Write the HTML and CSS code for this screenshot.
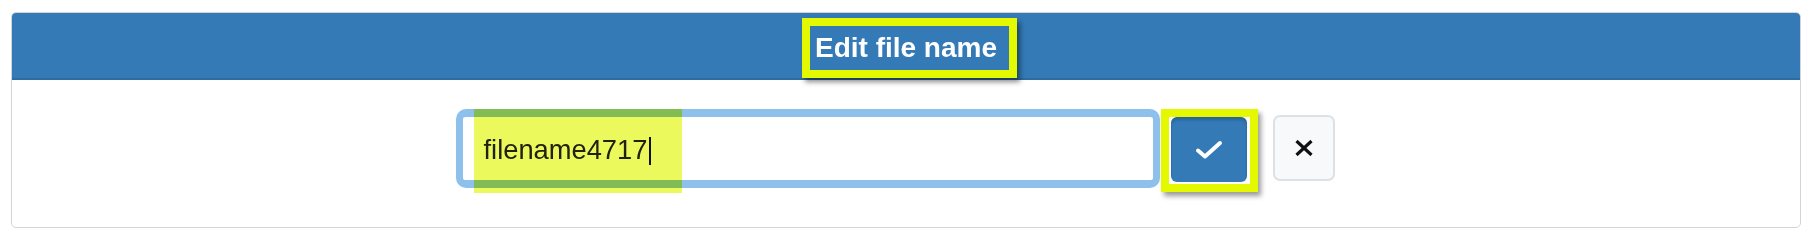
FILE: index.html
```html
<!DOCTYPE html>
<html lang="en">
<head>
<meta charset="utf-8">
<title>Edit file name</title>
<link rel="stylesheet" href="styles.css">
</head>
<body>
<div class="card">
  <div class="card-header">
    <h2 class="title">Edit file name</h2>
  </div>
  <div class="card-body">
    <div class="edit-row">
      <div class="name-input">
        <span class="name-text">filename4717</span><span class="caret"></span>
        <span class="text-hl"></span>
      </div>
      <span class="hl-box">
        <button class="btn-ok" type="button" aria-label="Save">
          <svg width="28" height="20" viewBox="0 0 28 20"><path d="M3 10.5 L10 16.5 L25 3" fill="none" stroke="#fff" stroke-width="4" stroke-linecap="round" stroke-linejoin="round"/></svg>
        </button>
      </span>
      <button class="btn-cancel" type="button" aria-label="Cancel">
        <svg width="18" height="16" viewBox="0 0 18 16"><path d="M1.5 1 L16.5 15 M16.5 1 L1.5 15" fill="none" stroke="#111" stroke-width="3.2" stroke-linecap="butt"/></svg>
      </button>
    </div>
  </div>
</div>
</body>
</html>
```

FILE: styles.css
```css
html, body {
  background: #ffffff;
}
body {
  margin: 12px 16px 0 11px;
  font-family: "Liberation Sans", Arial, sans-serif;
}
.card {
  border: 1px solid #d4d4d4;
  border-radius: 5px;
  overflow: hidden;
  background: #fff;
}
.card-header {
  background: #337ab7;
  border-bottom: 2px solid #2e6b9f;
  display: flex;
  justify-content: center;
  padding: 5px 0 0 7px;
  height: 60px;
}
.title {
  margin: 0;
  height: 44px;
  line-height: 44px;
  padding: 0 12px 0 5px;
  font-size: 28px;
  font-weight: bold;
  color: #ffffff;
  background: #337ab7;
  border: 8px solid #e4f800;
  box-shadow: 3px 4px 5px rgba(0, 0, 0, 0.45);
  position: relative;
  z-index: 1;
}
.card-body {
  height: 147px;
  box-sizing: border-box;
  padding-top: 29px;
}
.edit-row {
  display: flex;
  align-items: flex-start;
  justify-content: center;
  padding-right: 22px;
}
.name-input {
  position: relative;
  box-sizing: border-box;
  width: 704px;
  height: 79px;
  border: 8px solid #8dc1ec;
  border-left-width: 7px;
  border-right-width: 7px;
  border-radius: 10px;
  background: #fff;
  padding-left: 21px;
  display: flex;
  align-items: center;
  font-size: 27.3px;
  color: #222;
}
.name-text {
  line-height: 30px;
  padding-top: 2px;
}
.caret {
  display: inline-block;
  width: 2px;
  height: 28px;
  background: #111;
  margin-left: 2px;
  margin-top: 4px;
}
.text-hl {
  position: absolute;
  left: 11px;
  top: -8px;
  width: 208px;
  height: 84px;
  background: #ecf95c;
  mix-blend-mode: multiply;
}
.hl-box {
  margin-left: 1px;
  border: 8px solid #e4f800;
  padding: 0 3px 2px 1px;
  box-shadow: 3px 4px 5px rgba(0, 0, 0, 0.4);
  display: flex;
}
.btn-ok {
  width: 76px;
  height: 65px;
  border: none;
  border-radius: 6px;
  background: #337ab7;
  box-shadow: inset 0 3px 3px rgba(0, 0, 0, 0.18);
  display: flex;
  align-items: center;
  justify-content: center;
  padding: 0;
  margin-left: 1px;
  margin-top: 0;
}
.btn-cancel {
  margin-left: 15px;
  margin-top: 6px;
  width: 62px;
  height: 66px;
  box-sizing: border-box;
  background: #f8f9fa;
  border: 2px solid #dde1e6;
  border-radius: 7px;
  display: flex;
  align-items: center;
  justify-content: center;
  padding: 0;
}
```
